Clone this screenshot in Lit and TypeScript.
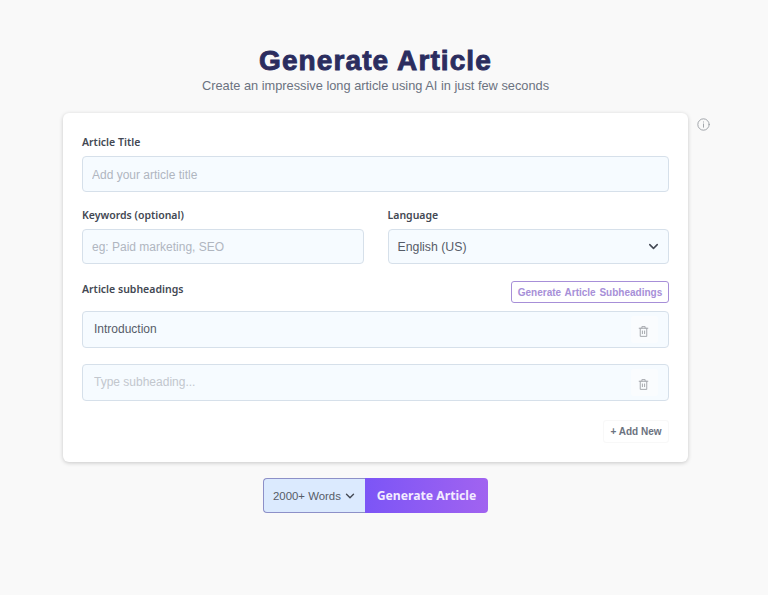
import { LitElement, html, css } from "lit";
import { customElement, state } from "lit/decorators.js";

const chevron = html`<svg viewBox="0 0 20 20" fill="none" stroke="currentColor" stroke-width="2" stroke-linecap="round" stroke-linejoin="round"><path d="M5 7.5l5 5 5-5" /></svg>`;

const trash = html`<svg viewBox="0 0 24 24" fill="none" stroke="currentColor" stroke-width="1.8" stroke-linecap="round" stroke-linejoin="round">
  <path d="M4 6h16M9 6V3h6v3M6 6v15h12V6M10 11v5M14 11v5" />
</svg>`;

const info = html`<svg viewBox="0 0 24 24" fill="none" stroke="currentColor" stroke-width="1.7" stroke-linecap="round">
  <circle cx="12" cy="12" r="10.5" /><path d="M12 11v6M12 7.2v.3" />
</svg>`;

@customElement("app-root")
export class AppRoot extends LitElement {
  static styles = css`
    :host {
      display: block;
      min-height: 595px;
      background: #f9f9f9;
      font-family: "Liberation Sans", Arial, sans-serif;
      color: #565c68;
    }
    * {
      box-sizing: border-box;
    }
    .page {
      padding: 44px 80px 0 63px;
    }
    .head {
      text-align: center;
    }
    h1 {
      margin: 0;
      height: 33px;
      font-size: 28px;
      line-height: 33px;
      font-weight: 700;
      letter-spacing: 1.1px;
      color: #2b2d5f;
      -webkit-text-stroke: 0.9px #2b2d5f;
    }
    .sub {
      margin: 0;
      height: 36px;
      font-size: 12.8px;
      line-height: 17px;
      color: #6b7280;
    }
    .card {
      position: relative;
      height: 349px;
      padding: 22px 19px 0;
      background: #fff;
      border-radius: 6px;
      box-shadow: 0 1px 4px rgba(0, 0, 0, 0.2);
    }
    .info {
      position: absolute;
      top: 5px;
      right: -22px;
      width: 13px;
      height: 13px;
      color: #9a9ea4;
    }
    .info svg {
      display: block;
    }
    label,
    .label {
      display: block;
      font-family: "Noto Sans", sans-serif;
      font-size: 10.5px;
      line-height: 15px;
      font-weight: 600;
      color: #434853;
    }
    .field {
      margin-bottom: 16px;
    }
    .field label {
      margin-bottom: 6px;
    }
    input,
    select {
      display: block;
      width: 100%;
      height: 36px;
      padding: 1px 9px 0;
      border: 1px solid #d6e0ea;
      border-radius: 4px;
      background: #f6fbff;
      font-family: "Liberation Sans", Arial, sans-serif;
      font-size: 12px;
      color: #565c68;
      outline: none;
    }
    input::placeholder {
      color: #b0b6bf;
      opacity: 1;
    }
    .two {
      display: grid;
      grid-template-columns: 1fr 1fr;
      gap: 24px;
      margin-bottom: 17px;
    }
    .two input,
    .two select {
      height: 35px;
    }
    .select-wrap {
      position: relative;
    }
    select {
      appearance: none;
      font-size: 12.3px;
    }
    .select-wrap svg {
      position: absolute;
      top: 10px;
      right: 8px;
      width: 15px;
      height: 15px;
      color: #434853;
      pointer-events: none;
    }
    .sub-head {
      display: flex;
      align-items: flex-start;
      justify-content: space-between;
      height: 22px;
      margin-bottom: 8px;
    }
    .sub-head .label {
      margin-top: 1px;
    }
    .gen-sub {
      width: 158px;
      height: 22px;
      padding: 0;
      border: 1px solid #a78fd8;
      border-radius: 3px;
      background: #fff;
      font-family: "Liberation Sans", Arial, sans-serif;
      font-size: 10px;
      font-weight: 700;
      word-spacing: 1px;
      color: #a78fd8;
    }
    .item {
      position: relative;
      margin-bottom: 16px;
    }
    .item input {
      height: 37px;
      padding: 0 46px 2px 11px;
    }
    .item input::placeholder {
      color: #c2c7ce;
    }
    .del {
      position: absolute;
      top: 5px;
      right: 11px;
      width: 27px;
      height: 27px;
      padding: 3px 3px 0 0;
      display: flex;
      align-items: center;
      justify-content: center;
      border: 0;
      border-radius: 3px;
      background: #fafcfe;
      color: #a3a7ac;
    }
    .del svg {
      width: 13px;
      height: 13px;
    }
    .add-row {
      display: flex;
      justify-content: flex-end;
      margin-top: 19px;
    }
    .add {
      width: 66px;
      height: 23px;
      padding: 0;
      border: 1px solid #f8f8f8;
      border-radius: 3px;
      background: #fff;
      font-family: "Liberation Sans", Arial, sans-serif;
      font-size: 10px;
      font-weight: 700;
      color: #6b7280;
    }
    .actions {
      display: flex;
      justify-content: center;
      margin-top: 16px;
    }
    .words {
      display: flex;
      align-items: center;
      gap: 2px;
      width: 102px;
      height: 35px;
      padding: 0 0 0 9px;
      border: 1px solid #8d90c8;
      border-right: 0;
      border-radius: 4px 0 0 4px;
      background: #dbeafe;
      font-family: "Liberation Sans", Arial, sans-serif;
      font-size: 11.4px;
      color: #565c68;
    }
    .words svg {
      width: 14px;
      height: 14px;
      color: #434853;
    }
    .go {
      width: 123px;
      height: 35px;
      padding: 0;
      border: 0;
      border-radius: 0 4px 4px 0;
      background: linear-gradient(90deg, #7c55f6, #a163f0);
      font-family: "Noto Sans", sans-serif;
      font-size: 12.2px;
      font-weight: 700;
      color: #f3ecff;
    }
  `;

  @state() subheadings = ["Introduction", ""];

  render() {
    return html`
      <div class="page">
        <div class="head">
          <h1>Generate Article</h1>
          <p class="sub">Create an impressive long article using AI in just few seconds</p>
        </div>
        <div class="card">
          <span class="info">${info}</span>
          <div class="field">
            <label>Article Title</label>
            <input placeholder="Add your article title" />
          </div>
          <div class="two field">
            <div>
              <label>Keywords (optional)</label>
              <input placeholder="eg: Paid marketing, SEO" />
            </div>
            <div>
              <label>Language</label>
              <div class="select-wrap">
                <select><option>English (US)</option></select>
                ${chevron}
              </div>
            </div>
          </div>
          <div class="sub-head">
            <span class="label">Article subheadings</span>
            <button class="gen-sub">Generate Article Subheadings</button>
          </div>
          ${this.subheadings.map(
            (s) => html`
              <div class="item">
                <input .value=${s} placeholder="Type subheading..." />
                <button class="del">${trash}</button>
              </div>
            `
          )}
          <div class="add-row"><button class="add">+ Add New</button></div>
        </div>
        <div class="actions">
          <button class="words">2000+ Words ${chevron}</button>
          <button class="go">Generate Article</button>
        </div>
      </div>
    `;
  }
}
